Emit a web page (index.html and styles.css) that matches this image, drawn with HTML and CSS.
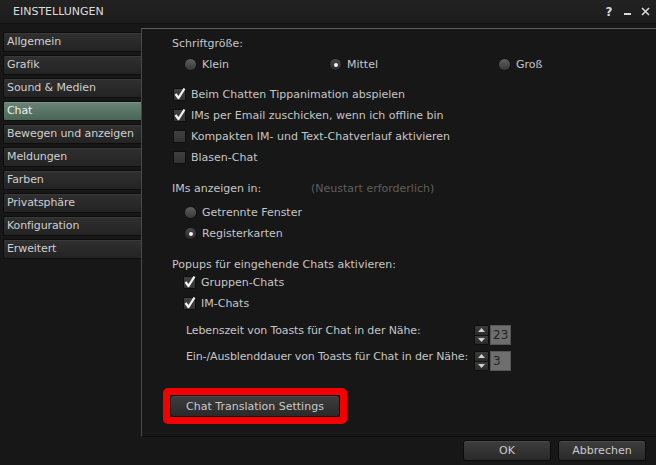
FILE: index.html
```html
<!DOCTYPE html>
<html lang="de">
<head>
<meta charset="utf-8">
<title>Einstellungen</title>
<link rel="stylesheet" href="styles.css">
</head>
<body>
<div class="window">
  <div class="titlebar">
    <span class="title">EINSTELLUNGEN</span>
    <div class="title-icons">
      <span class="ticon help">?</span>
      <span class="ticon min"></span>
      <span class="ticon close">
        <svg width="9" height="9" viewBox="0 0 9 9"><path d="M1 1 L8 8 M8 1 L1 8" stroke="#d8d8d8" stroke-width="1.6" fill="none"/></svg>
      </span>
    </div>
  </div>
  <div class="main">
    <div class="sidebar">
      <div class="tab">Allgemein</div>
      <div class="tab">Grafik</div>
      <div class="tab">Sound &amp; Medien</div>
      <div class="tab active">Chat</div>
      <div class="tab">Bewegen und anzeigen</div>
      <div class="tab">Meldungen</div>
      <div class="tab">Farben</div>
      <div class="tab">Privatsphäre</div>
      <div class="tab">Konfiguration</div>
      <div class="tab">Erweitert</div>
    </div>
    <div class="panel">
      <div class="heading h-font">Schriftgröße:</div>
      <div class="radio-row">
        <label class="opt col1"><span class="radio"></span>Klein</label>
        <label class="opt col2"><span class="radio on"></span>Mittel</label>
        <label class="opt"><span class="radio"></span>Groß</label>
      </div>

      <div class="checks">
        <label class="opt row"><span class="check on"><svg width="14" height="14" viewBox="0 0 14 14"><path d="M2.5 7 L5.5 11 L11.5 1.5" stroke="#f2f2f2" stroke-width="2.3" fill="none" stroke-linejoin="round"/></svg></span>Beim Chatten Tippanimation abspielen</label>
        <label class="opt row"><span class="check on"><svg width="14" height="14" viewBox="0 0 14 14"><path d="M2.5 7 L5.5 11 L11.5 1.5" stroke="#f2f2f2" stroke-width="2.3" fill="none" stroke-linejoin="round"/></svg></span>IMs per Email zuschicken, wenn ich offline bin</label>
        <label class="opt row"><span class="check"></span>Kompakten IM- und Text-Chatverlauf aktivieren</label>
        <label class="opt row"><span class="check"></span>Blasen-Chat</label>
      </div>

      <div class="heading h-ims"><span class="ims-label">IMs anzeigen in:</span><span class="hint">(Neustart erforderlich)</span></div>
      <div class="radios-v">
        <label class="opt row"><span class="radio"></span>Getrennte Fenster</label>
        <label class="opt row"><span class="radio on"></span>Registerkarten</label>
      </div>

      <div class="heading h-popups">Popups für eingehende Chats aktivieren:</div>
      <div class="checks-indent">
        <label class="opt row"><span class="check on"><svg width="14" height="14" viewBox="0 0 14 14"><path d="M2.5 7 L5.5 11 L11.5 1.5" stroke="#f2f2f2" stroke-width="2.3" fill="none" stroke-linejoin="round"/></svg></span>Gruppen-Chats</label>
        <label class="opt row"><span class="check on"><svg width="14" height="14" viewBox="0 0 14 14"><path d="M2.5 7 L5.5 11 L11.5 1.5" stroke="#f2f2f2" stroke-width="2.3" fill="none" stroke-linejoin="round"/></svg></span>IM-Chats</label>
      </div>

      <div class="spin-rows">
        <div class="spin-row">
          <span class="spin-label">Lebenszeit von Toasts für Chat in der Nähe:</span>
          <div class="spinner">
            <div class="arrows">
              <span class="arr up"><svg width="7" height="4" viewBox="0 0 7 4"><path d="M0 4 L3.5 0 L7 4 Z" fill="#d0d0d0"/></svg></span>
              <span class="arr down"><svg width="7" height="4" viewBox="0 0 7 4"><path d="M0 0 L3.5 4 L7 0 Z" fill="#d0d0d0"/></svg></span>
            </div>
            <span class="value">23</span>
          </div>
        </div>
        <div class="spin-row">
          <span class="spin-label">Ein-/Ausblenddauer von Toasts für Chat in der Nähe:</span>
          <div class="spinner">
            <div class="arrows">
              <span class="arr up"><svg width="7" height="4" viewBox="0 0 7 4"><path d="M0 4 L3.5 0 L7 4 Z" fill="#d0d0d0"/></svg></span>
              <span class="arr down"><svg width="7" height="4" viewBox="0 0 7 4"><path d="M0 0 L3.5 4 L7 0 Z" fill="#d0d0d0"/></svg></span>
            </div>
            <span class="value">3</span>
          </div>
        </div>
      </div>

      <div class="highlight">
        <button class="btn translate">Chat Translation Settings</button>
      </div>
    </div>
  </div>
  <div class="footer">
    <button class="btn footer-btn">OK</button>
    <button class="btn footer-btn">Abbrechen</button>
  </div>
</div>
</body>
</html>
```

FILE: styles.css
```css
* { box-sizing: border-box; }

html, body {
  margin: 0;
  padding: 0;
  background: #171717;
}

body {
  font-family: "DejaVu Sans", "Liberation Sans", sans-serif;
  font-size: 11px;
  color: #c6c6c6;
}

.window {
  width: 656px;
  height: 465px;
  display: flex;
  flex-direction: column;
  background: #171717;
  overflow: hidden;
}

/* Title bar */
.titlebar {
  height: 24px;
  flex: none;
  display: flex;
  align-items: center;
  justify-content: space-between;
  background: linear-gradient(#222222, #1c1c1c);
  border-bottom: 1px solid #111111;
  padding: 0 6px 0 13px;
}

.title {
  color: #dcdcdc;
  font-size: 11px;
}

.title-icons {
  display: flex;
  align-items: center;
  gap: 8px;
}

.ticon {
  display: flex;
  align-items: center;
  justify-content: center;
  width: 10px;
  height: 12px;
  color: #d8d8d8;
}

.help {
  font-weight: bold;
  font-size: 12px;
}

.min::before {
  content: "";
  display: block;
  width: 7px;
  height: 2px;
  margin-top: 5px;
  background: #d8d8d8;
}

/* Main area */
.main {
  flex: 1;
  display: flex;
  min-height: 0;
}

.sidebar {
  width: 141px;
  flex: none;
  padding: 8px 0 0 3px;
  display: flex;
  flex-direction: column;
  gap: 3px;
}

.tab {
  height: 20px;
  line-height: 18px;
  padding-left: 3px;
  border: 1px solid #0e0e0e;
  border-right: none;
  border-radius: 2px 0 0 2px;
  background: linear-gradient(#303030, #232323);
  color: #cfcfcf;
  letter-spacing: -0.1px;
  white-space: nowrap;
  overflow: hidden;
  box-shadow: inset 0 1px 0 #393939;
}

.tab.active {
  background: linear-gradient(#698575, #4a6657);
  box-shadow: inset 0 1px 0 #7a9585;
  color: #eeeeee;
}

.panel {
  flex: 1;
  margin-top: 4px;
  border-top: 1px solid #5c5c5c;
  border-left: 1px solid #484848;
  border-bottom: 1px solid #0c0c0c;
  padding: 4px 0 0 30px;
  display: flex;
  flex-direction: column;
}

.heading {
  height: 21px;
  line-height: 21px;
}

.h-ims {
  margin-top: 10px;
  display: flex;
}

.ims-label {
  width: 139px;
}

.hint {
  color: #5e5e5e;
}

.h-popups {
  margin-top: 13px;
  height: 15px;
  line-height: 15px;
}

.opt {
  display: flex;
  align-items: center;
  white-space: nowrap;
}

.row {
  height: 21px;
}

.radio-row {
  display: flex;
  height: 21px;
  padding-left: 12px;
}

.col1 { width: 145px; }
.col2 { width: 169px; }

.radio {
  width: 13px;
  height: 13px;
  border-radius: 50%;
  flex: none;
  margin-right: 5px;
  background: linear-gradient(#5e5e5e, #383838);
  border: 1px solid #141414;
  display: flex;
  align-items: center;
  justify-content: center;
}

.radio.on {
  background: linear-gradient(#4a4a4a, #2a2a2a);
}

.radio.on::after {
  content: "";
  width: 4px;
  height: 4px;
  border-radius: 50%;
  background: #f4f4f4;
}

.checks {
  margin-top: 9px;
  padding-left: 1px;
}

.radios-v {
  margin-top: 3px;
  padding-left: 12px;
}

.checks-indent {
  padding-left: 11px;
}

.check {
  position: relative;
  width: 13px;
  height: 13px;
  flex: none;
  margin-right: 5px;
  background: linear-gradient(#404040, #333333);
  border: 1px solid #0e0e0e;
  border-radius: 1px;
}

.check svg {
  position: absolute;
  left: -1px;
  top: -2px;
}

/* Spinners */
.spin-rows {
  margin-top: 11px;
  padding-left: 14px;
}

.spin-row {
  display: flex;
  align-items: flex-start;
  height: 26px;
}

.spin-label {
  width: 288px;
  flex: none;
  line-height: 12px;
  letter-spacing: -0.12px;
  white-space: nowrap;
}

.spinner {
  display: flex;
  height: 20px;
}

.arrows {
  width: 15px;
  display: flex;
  flex-direction: column;
  border: 1px solid #0e0e0e;
  border-radius: 2px;
  overflow: hidden;
}

.arr {
  flex: 1;
  display: flex;
  align-items: center;
  justify-content: center;
  background: linear-gradient(#3c3c3c, #2a2a2a);
}

.arr.up { border-bottom: 1px solid #111; }

.value {
  width: 21px;
  margin-left: 1px;
  height: 20px;
  line-height: 18px;
  padding-left: 2px;
  background: #6e6e6e;
  color: #232323;
  font-size: 12px;
  border: 1px solid #555;
}

/* Buttons */
.btn {
  font-family: "DejaVu Sans", "Liberation Sans", sans-serif;
  font-size: 11px;
  color: #cacaca;
  background: linear-gradient(#3d3d3d, #2a2a2a);
  border: 1px solid #0b0b0b;
  border-radius: 3px;
  box-shadow: inset 0 1px 0 #4a4a4a;
  padding: 0;
}

.highlight {
  margin-top: 11px;
  margin-left: -9px;
  width: 184px;
  border: 7px solid #f40000;
  border-radius: 5px;
  display: flex;
}

.translate {
  width: 170px;
  height: 22px;
}

.footer {
  height: 28px;
  flex: none;
  display: flex;
  justify-content: flex-end;
  align-items: flex-start;
  padding: 3px 10px 0 0;
  gap: 7px;
}

.footer-btn {
  width: 88px;
  height: 21px;
}
```
